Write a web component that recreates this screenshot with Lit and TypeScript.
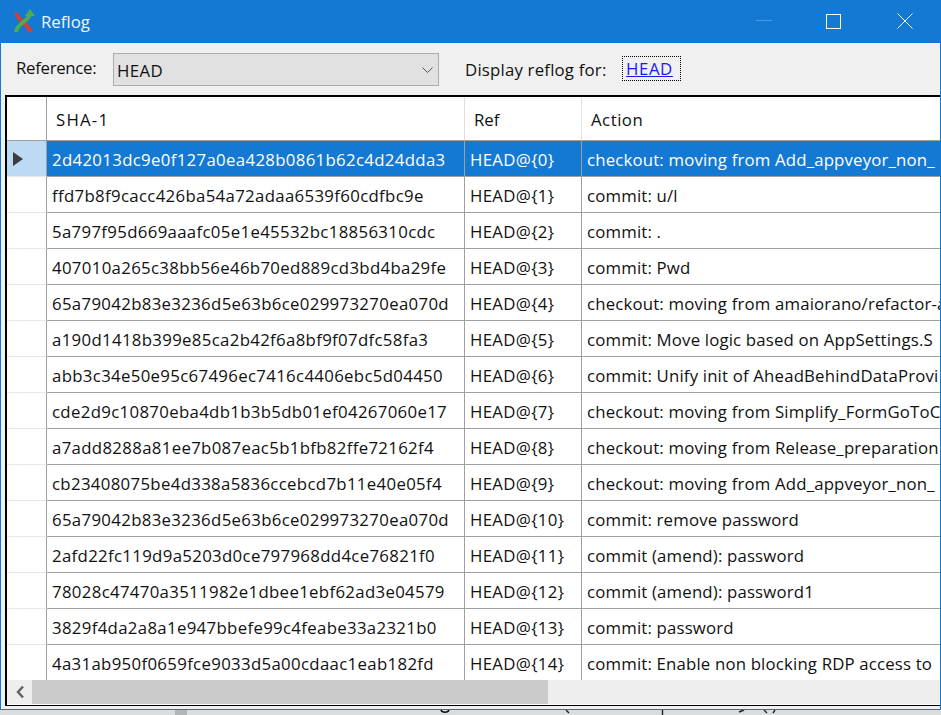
import { LitElement, html, css } from "lit";
import { customElement } from "lit/decorators.js";

const ROWS: [string, string][] = [
  ["2d42013dc9e0f127a0ea428b0861b62c4d24dda3", "checkout: moving from Add_appveyor_non_"],
  ["ffd7b8f9cacc426ba54a72adaa6539f60cdfbc9e", "commit: u/l"],
  ["5a797f95d669aaafc05e1e45532bc18856310cdc", "commit: ."],
  ["407010a265c38bb56e46b70ed889cd3bd4ba29fe", "commit: Pwd"],
  ["65a79042b83e3236d5e63b6ce029973270ea070d", "checkout: moving from amaiorano/refactor-a"],
  ["a190d1418b399e85ca2b42f6a8bf9f07dfc58fa3", "commit: Move logic based on AppSettings.S"],
  ["abb3c34e50e95c67496ec7416c4406ebc5d04450", "commit: Unify init of AheadBehindDataProvi"],
  ["cde2d9c10870eba4db1b3b5db01ef04267060e17", "checkout: moving from Simplify_FormGoToC"],
  ["a7add8288a81ee7b087eac5b1bfb82ffe72162f4", "checkout: moving from Release_preparation"],
  ["cb23408075be4d338a5836ccebcd7b11e40e05f4", "checkout: moving from Add_appveyor_non_"],
  ["65a79042b83e3236d5e63b6ce029973270ea070d", "commit: remove password"],
  ["2afd22fc119d9a5203d0ce797968dd4ce76821f0", "commit (amend): password"],
  ["78028c47470a3511982e1dbee1ebf62ad3e04579", "commit (amend): password1"],
  ["3829f4da2a8a1e947bbefe99c4feabe33a2321b0", "commit: password"],
  ["4a31ab950f0659fce9033d5a00cdaac1eab182fd", "commit: Enable non blocking RDP access to"],
];

@customElement("app-root")
export class AppRoot extends LitElement {
  static styles = css`
    :host {
      display: block;
      width: 941px;
      height: 715px;
      overflow: hidden;
      background: #dcdcdc;
      font-family: "Open Sans", "Noto Sans", sans-serif;
      font-size: 16.8px;
      color: #111;
    }
    .window {
      height: 710px;
      box-sizing: border-box;
      background: #f0f0f0;
      border: 1px solid #1479d2;
      border-top: 0;
      display: flex;
      flex-direction: column;
    }
    .title {
      height: 43px;
      flex: none;
      background: #1479d2;
      color: #fff;
      display: flex;
      align-items: center;
      padding-left: 13px;
      margin-left: -1px;
      padding-bottom: 1px;
      box-sizing: border-box;
    }
    .title svg.logo { margin-right: 5px; margin-top: -1px; }
    .title .name { flex: 1; color: #eef6fd; }
    .wb { width: 71px; height: 43px; display: flex; align-items: center; justify-content: center; }
    .wb.min { width: 68px; }
    .toolbar {
      height: 52px;
      flex: none;
      display: flex;
      align-items: center;
      padding-left: 15px;
      box-sizing: border-box;
    }
    .lbl1 { width: 97px; letter-spacing: -0.3px; margin-top: -3px; }
    .select {
      width: 326px;
      height: 33px;
      box-sizing: border-box;
      background: #e1e1e1;
      border: 1px solid #adadad;
      display: flex;
      align-items: center;
      justify-content: space-between;
      padding: 2px 5px 0 3px;
      letter-spacing: 0.4px;
    }
    .lbl2 { margin-left: 26px; width: 157px; letter-spacing: 0.2px; flex: none; }
    .link {
      width: 59px;
      height: 25px;
      margin-top: -2px;
      padding-left: 3px;
      border: 1px dotted #000;
      line-height: 23px;
      color: #1a1aee;
      text-decoration: underline;
      letter-spacing: 0.6px;
      box-sizing: border-box;
    }
    .grid {
      margin-left: 4px;
      height: 611px;
      flex: none;
      box-sizing: border-box;
      border: 2px solid #000;
      border-width: 2px 0 1px 2px;
      background: #fff;
      overflow: hidden;
      display: flex;
      flex-direction: column;
    }
    .rows { height: 583px; flex: none; overflow: hidden; }
    .row {
      display: grid;
      grid-template-columns: 40px 418px 117px 700px;
      height: 36px;
      box-sizing: border-box;
      border-bottom: 1px solid #a0a0a0;
      white-space: nowrap;
      letter-spacing: 0.33px;
    }
    .row > div {
      border-right: 1px solid #a0a0a0;
      overflow: hidden;
      padding-left: 5px;
      line-height: 38px;
      box-sizing: border-box;
    }
    .row > .action { letter-spacing: 0.17px; }
    .row > .rh { padding: 0; border-bottom: 1px solid #e8e8e8; margin-bottom: -1px; }
    .head { height: 44px; }
    .head > div { line-height: 45px; padding-left: 9px; border-right-color: #e0e0e0; }
    .head > .rh { border-bottom: 0; margin: 0; border-right-color: #a0a0a0; }
    .head .sha { letter-spacing: 1.2px; }
    .head .ref { letter-spacing: 0; }
    .head .act { letter-spacing: 0.5px; }
    .sel { background: #1479d2; color: #fff; }
    .sel > .rh { background: #bcdaf3; display: flex; align-items: center; padding-left: 6px; }
    .scroll {
      height: 24px;
      flex: none;
      background: #eeeeee;
      display: flex;
    }
    .btn { width: 25px; display: flex; align-items: center; justify-content: center; }
    .thumb { width: 516px; background: #cbcbcb; }
    .below { height: 5px; display: block; }
  `;

  render() {
    return html`
      <div class="window">
        <div class="title">
          <svg class="logo" width="23" height="26" viewBox="0 0 23 26">
            <path d="M3 5 C5 12 14 15 18 24" fill="none" stroke="#d8402f" stroke-width="4" />
            <path d="M3 24 C4 15 16 13 17 6" fill="none" stroke="#4cae4f" stroke-width="4" />
            <path d="M12 8 L17 1 L22 8 Z" fill="#4cae4f" />
          </svg>
          <span class="name">Reflog</span>
          <div class="wb min"><svg width="16" height="2"><rect width="16" height="1" fill="#4b9be0" /></svg></div>
          <div class="wb"><svg width="15" height="15"><rect x=".5" y=".5" width="14" height="14" fill="none" stroke="#fff" /></svg></div>
          <div class="wb"><svg width="16" height="16"><path d="M.5 .5 L15.5 15.5 M15.5 .5 L.5 15.5" stroke="#fff" fill="none" /></svg></div>
        </div>
        <div class="toolbar">
          <span class="lbl1">Reference:</span>
          <div class="select">
            <span>HEAD</span>
            <svg width="11" height="7"><path d="M.5 .5 L5.5 5.5 L10.5 .5" fill="none" stroke="#555" /></svg>
          </div>
          <span class="lbl2">Display reflog for:</span>
          <span class="link">HEAD</span>
        </div>
        <div class="grid">
          <div class="rows">
            <div class="row head">
              <div class="rh"></div><div class="sha">SHA-1</div><div class="ref">Ref</div><div class="act">Action</div>
            </div>
            ${ROWS.map(
              (r, i) => html`
                <div class="row ${i === 0 ? "sel" : ""}">
                  <div class="rh">
                    ${i === 0
                      ? html`<svg width="10" height="14"><path d="M0 0 L10 7 L0 14 Z" fill="#3c3c3c" /></svg>`
                      : ""}
                  </div>
                  <div>${r[0]}</div>
                  <div>HEAD@{${i}}</div>
                  <div class="action">${r[1]}</div>
                </div>
              `
            )}
          </div>
          <div class="scroll">
            <div class="btn"><svg width="10" height="14"><path d="M8 1.5 L3 7 L8 12.5" fill="none" stroke="#606060" stroke-width="2.4" /></svg></div>
            <div class="thumb"></div>
          </div>
        </div>
      </div>
      <svg class="below" width="941" height="5">
        <rect x="175" y="0" width="12" height="5" fill="#b4b4b4" />
        <path d="M441 0 C442 3 448 3 449 0" fill="none" stroke="#111" stroke-width="1.6" />
        <path d="M566 0 L569 3" stroke="#222" stroke-width="1.4" />
        <path d="M662.5 0 L662.5 5" stroke="#222" stroke-width="1.4" />
        <path d="M739 2 L744 0" stroke="#222" stroke-width="1.6" />
        <path d="M764 0 L767 3 M775 0 L773 3" stroke="#222" stroke-width="1.4" />
      </svg>
    `;
  }
}
